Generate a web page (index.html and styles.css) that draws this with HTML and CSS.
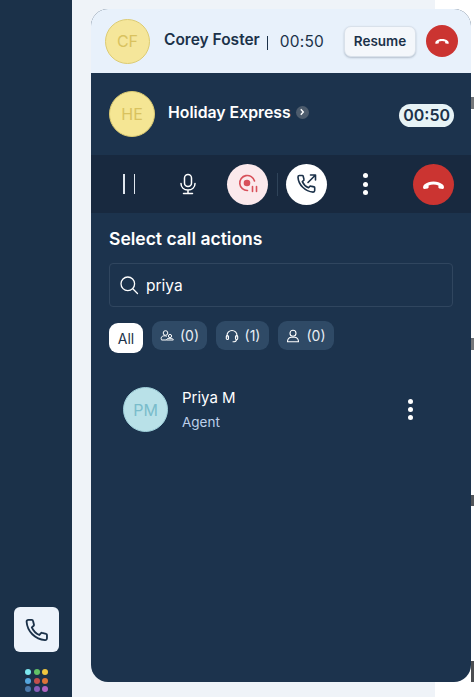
FILE: index.html
```html
<!DOCTYPE html>
<html lang="en">
<head>
<meta charset="utf-8">
<title>Call actions</title>
<link rel="stylesheet" href="styles.css">
</head>
<body>
<div class="app">
  <aside class="sidebar">
    <button class="phone-tile">
      <svg width="26" height="26" viewBox="0 0 24 24" fill="none" stroke="#1b3149" stroke-width="1.7" stroke-linejoin="round"><path d="M4.2 2.6h3.1c.5 0 .9.3 1 .8l.9 3.7c.1.4 0 .7-.3 1L7.2 9.600c1.300 3 3.900 5.700 7 7l1.500-1.700c.3-.3.7-.4 1-.3l3.700.9c.5.1.8.5.8 1v3.100c0 1-.8 1.800-1.800 1.700C10.300 20.600 3 13.300 2.400 4.400 2.400 3.400 3.200 2.600 4.200 2.600z"/></svg>
    </button>
    <div class="dots">
      <i class="d1"></i><i class="d2"></i><i class="d3"></i>
      <i class="d4"></i><i class="d5"></i><i class="d6"></i>
      <i class="d7"></i><i class="d8"></i><i class="d9"></i>
    </div>
  </aside>
  <main class="stage">
    <section class="panel">
      <header class="held">
        <div class="avatar avatar-yellow held-avatar">CF</div>
        <div class="held-name">Corey Foster</div>
        <div class="held-sep"></div>
        <div class="held-time">00:50</div>
        <button class="resume">Resume</button>
        <button class="end end-small">
          <svg width="16" height="16" viewBox="0 0 24 24" fill="#fff"><path d="M2 14.500c0-1 .4-1.900 1.200-2.500C5.600 10 8.700 9 12 9s6.400 1 8.800 3c.8.6 1.200 1.500 1.200 2.500v.7c0 .7-.6 1.200-1.300 1.100l-3-.5c-.6-.1-1-.6-1-1.100v-1.800c-1.400-.6-3.100-.9-4.700-.9s-3.300.3-4.700.9v1.800c0 .5-.4 1-1 1.100l-3 .5c-.7.1-1.300-.4-1.300-1.100z"/></svg>
        </button>
      </header>
      <div class="caller">
        <div class="avatar avatar-yellow caller-avatar">HE</div>
        <div class="caller-name">Holiday Express</div>
        <span class="chev">
          <svg width="8" height="8" viewBox="0 0 8 8" fill="none" stroke="#fff" stroke-width="1.400"><path d="M2.800 1.300 5.300 4 2.800 6.700"/></svg>
        </span>
        <div class="timer">00:50</div>
      </div>
      <div class="toolbar">
        <button class="tool tool-pause"><span></span><span></span></button>
        <button class="tool tool-mic">
          <svg width="22" height="24" viewBox="0 0 22 24" fill="none" stroke="#fff" stroke-width="1.500" stroke-linecap="round"><rect x="7.500" y="2.500" width="7" height="12" rx="3.500"/><path d="M4 11.500c0 4 3 6.500 7 6.500s7-2.500 7-6.500M11 18v3.500M6.500 21.500h9"/></svg>
        </button>
        <button class="circle circle-rec">
          <svg width="26" height="26" viewBox="0 0 26 26" fill="none" stroke="#d8505a" stroke-width="1.600" stroke-linecap="round"><path d="M12.500 19.500a7.500 7.500 0 1 1 7-9.500"/><circle cx="12" cy="12" r="3.300" fill="#d8505a" stroke="none"/><path d="M17.500 15.500v5M21.500 15.500v5"/></svg>
        </button>
        <span class="divider"></span>
        <button class="circle circle-transfer">
          <svg width="24" height="24" viewBox="0 0 24 24" fill="none" stroke="#1b3149" stroke-width="1.600" stroke-linejoin="round" stroke-linecap="round"><path d="M4.500 3.500h2.800c.4 0 .8.300.9.700l.8 3.300c.1.300 0 .7-.3.900L7.300 9.600c1.200 2.700 3.500 5 6.200 6.200l1.300-1.400c.2-.3.600-.4.900-.3l3.300.8c.4.100.7.500.7.900v2.800c0 .9-.7 1.500-1.600 1.500C10.200 19.600 3.400 12.800 3 5.100c0-.9.600-1.600 1.500-1.600z"/><path d="M13 10.500 20.500 3M15.500 3h5v5"/></svg>
        </button>
        <button class="tool tool-more"><i></i><i></i><i></i></button>
        <button class="end end-large">
          <svg width="25" height="25" viewBox="0 0 24 24" fill="#fff"><path d="M2 14.500c0-1 .4-1.900 1.200-2.500C5.600 10 8.700 9 12 9s6.400 1 8.800 3c.8.6 1.200 1.500 1.200 2.500v.7c0 .7-.6 1.200-1.300 1.100l-3-.5c-.6-.1-1-.6-1-1.100v-1.800c-1.400-.6-3.100-.9-4.700-.9s-3.300.3-4.700.9v1.800c0 .5-.4 1-1 1.100l-3 .5c-.7.1-1.300-.4-1.300-1.100z"/></svg>
        </button>
      </div>
      <div class="actions">
        <h2 class="actions-title">Select call actions</h2>
        <div class="search">
          <svg width="20" height="20" viewBox="0 0 20 20" fill="none" stroke="#fff" stroke-width="1.300" stroke-linecap="round"><circle cx="8.800" cy="8.800" r="6.800"/><path d="m13.800 13.800 4.700 4.700"/></svg>
          <span class="search-text">priya</span>
        </div>
        <div class="filters">
          <button class="chip chip-active">All</button>
          <button class="chip">
            <svg width="14" height="14" viewBox="0 0 14 14" fill="none" stroke="#fff" stroke-width="1"><circle cx="5.500" cy="4" r="2.300"/><circle cx="10" cy="7" r="1.600"/><path d="M1.500 10.800c-1-1.900.2-3.800 2.300-4 .9-.1 2 0 3 .5M6.500 11c.1-1 1-1.700 2.500-1.700h2c1.300 0 2.200.7 2.300 1.700z"/><path d="M1.500 11h5"/></svg>
            <span>(0)</span>
          </button>
          <button class="chip">
            <svg width="14" height="14" viewBox="0 0 14 14" fill="none" stroke="#fff" stroke-width="1.100" stroke-linecap="round"><path d="M2 8V6.500a5 5 0 0 1 10 0V8"/><rect x="1.300" y="6.500" width="2.200" height="4" rx="1"/><rect x="10.500" y="6.500" width="2.200" height="4" rx="1"/><path d="M11.500 10.500c0 1.500-1.300 2.300-3.500 2.300"/></svg>
            <span>(1)</span>
          </button>
          <button class="chip">
            <svg width="14" height="14" viewBox="0 0 14 14" fill="none" stroke="#fff" stroke-width="1.100"><circle cx="7" cy="4.300" r="3"/><path d="M1.500 12.800c0-2.700 2-4.300 3.500-4.600h4c1.500.3 3.500 1.900 3.500 4.600z" stroke-linejoin="round"/></svg>
            <span>(0)</span>
          </button>
        </div>
        <div class="result">
          <div class="avatar avatar-blue result-avatar">PM</div>
          <div class="result-text">
            <div class="result-name">Priya M</div>
            <div class="result-role">Agent</div>
          </div>
          <button class="tool tool-more result-more"><i></i><i></i><i></i></button>
        </div>
      </div>
    </section>
    <i class="tick tick-1"></i>
    <i class="tick tick-2"></i>
    <i class="tick tick-3"></i>
    <i class="tick tick-4"></i>
  </main>
</div>
</body>
</html>
```
FILE: styles.css
```css
* { box-sizing: border-box; }
html, body { margin: 0; padding: 0; height: 100%; }
body { font-family: Inter, "Liberation Sans", sans-serif; overflow: hidden; background: #fff; }
button { font: inherit; border: 0; padding: 0; background: none; cursor: pointer; display: flex; align-items: center; justify-content: center; }

.app { display: flex; width: 474px; height: 697px; }

.sidebar { width: 72px; flex: none; background: #1b3149; display: flex; flex-direction: column; align-items: center; justify-content: flex-end; padding-bottom: 5px; }
.phone-tile { width: 45px; height: 45px; border-radius: 6px; background: #edf3fb; margin-left: 1px; }
.dots { display: grid; grid-template-columns: repeat(3, 6px); gap: 2.300px; margin-top: 17px; margin-left: 1px; }
.dots i { width: 6px; height: 6px; border-radius: 50%; display: block; }
.d1 { background: #7de8f0; }
.d2 { background: #62c266; }
.d3 { background: #efc63f; }
.d4 { background: #55a6de; }
.d5 { background: #c24f4c; }
.d6 { background: #dc7438; }
.d7 { background: #4a78aa; }
.d8 { background: #875db9; }
.d9 { background: #b062c0; }

.stage { flex: 1; position: relative; background: linear-gradient(to right, #eff3f8 363px, #fff 363px); padding: 9px 3px 15px 19px; min-width: 0; }
.tick { position: absolute; right: 0; width: 3px; background: #77797c; display: block; }
.tick-1 { top: 97px; height: 12px; }
.tick-2 { top: 338px; height: 12px; }
.tick-3 { top: 495px; height: 11px; background: #55585c; }
.tick-4 { top: 661px; height: 21px; background: #4d4f52; }
.panel { height: 673px; border-radius: 17px; overflow: hidden; background: #1c334d; display: flex; flex-direction: column; }

.avatar { border-radius: 50%; display: flex; align-items: center; justify-content: center; flex: none; font-size: 16px; }
.avatar-yellow { background: #f5e69a; border: 1px solid #dccb72; color: #d9c25f; }
.avatar-blue { background: #b9e1e8; border: 1px solid #9fd0da; color: #79bccb; }

.held { height: 64px; flex: none; background: #e8f1fb; display: flex; align-items: center; padding: 0 13px 0 14px; }
.held-avatar { width: 45px; height: 45px; }
.held-name { font-size: 15.500px; font-weight: 600; color: #1b3149; margin-left: 14px; margin-top: -4px; white-space: nowrap; }
.held-sep { width: 1px; height: 14px; background: #1b3149; margin-left: 7px; margin-top: 3px; }
.held-time { font-size: 15.500px; color: #1b3149; margin-left: 12px; margin-top: 1px; letter-spacing: .2px; }
.resume { width: 72px; height: 31px; margin-left: auto; border-radius: 7px; background: #f4f7fb; border: 1px solid #d9e1ea; box-shadow: 0 1px 2px rgba(27,49,73,.25); color: #1b3149; font-size: 13.500px; font-weight: 600; }
.end { border-radius: 50%; background: #cb3431; flex: none; }
.end-small { width: 32px; height: 32px; margin-left: 10px; }

.caller { height: 82px; flex: none; display: flex; align-items: center; padding: 0 17px 0 18px; color: #fff; }
.caller-avatar { width: 46px; height: 46px; background: #f5e694; }
.caller-name { font-size: 15.800px; font-weight: 600; margin-left: 13px; margin-top: -4px; white-space: nowrap; }
.chev { width: 13px; height: 13px; border-radius: 50%; background: #4d5c6d; display: flex; align-items: center; justify-content: center; margin-left: 5px; margin-top: -4px; }
.timer { margin-left: auto; background: #e7f3f6; color: #1b3149; font-size: 16px; font-weight: 600; height: 23px; padding: 0 4px; border-radius: 12px; display: flex; align-items: center; margin-top: 2px; }

.toolbar { height: 58px; flex: none; background: #18293f; position: relative; display: flex; align-items: center; padding: 0 17px 0 27px; }
.tool { background: none; }
.tool-pause { width: 22px; height: 22px; gap: 9px; }
.tool-pause span { width: 1.500px; height: 20px; background: #dfe6ee; display: block; }
.tool-mic { width: 22px; height: 24px; margin-left: 37px; }
.circle { width: 41px; height: 41px; border-radius: 50%; flex: none; }
.circle-rec { background: #fbe9ec; margin-left: 28px; }
.divider { width: 1px; height: 23px; background: #2f4359; margin: 0 8px 0 9px; }
.circle-transfer { background: #fff; }
.tool-more { width: 8px; height: 22px; flex-direction: column; gap: 3.500px; }
.tool-more i { width: 5px; height: 5px; border-radius: 50%; background: #fff; display: block; }
.toolbar .tool-more { margin-left: 34px; }
.end-large { width: 41px; height: 41px; margin-left: auto; }

.actions { flex: 1; display: flex; flex-direction: column; padding: 15px 18px 0; color: #fff; }
.actions-title { margin: 0; font-size: 17.500px; font-weight: 600; line-height: 22px; }
.search { height: 44px; margin-top: 13px; border: 1px solid #30465f; border-radius: 4px; display: flex; align-items: center; padding: 0 9px; gap: 7px; }
.search-text { font-size: 15.500px; font-weight: 400; }
.filters { display: flex; gap: 9px; margin-top: 14px; align-items: flex-start; }
.chip { height: 29px; padding: 0 10px; border-radius: 9px; background: #2f4a66; color: #e8eef5; font-size: 14px; gap: 6px; }
.chip-active { width: 34px; padding: 0; background: #fff; color: #1b3149; height: 30px; margin-top: 2px; }
.chip:nth-child(2) { width: 55px; padding: 0; }
.chip:nth-child(3) { width: 53px; padding: 0; }
.chip:nth-child(4) { width: 56px; padding: 0; }

.result { display: flex; align-items: center; margin-top: 34px; padding: 0 22px 0 14px; }
.result-avatar { width: 45px; height: 45px; }
.result-text { margin-left: 14px; margin-top: 2px; }
.result-name { font-size: 15px; color: #fff; line-height: 22px; margin-top: -3px; }
.result-role { font-size: 13.500px; color: #bcd0ea; line-height: 20px; margin-top: 3px; }
.result-more { margin-left: auto; margin-right: 17px; gap: 3px; }
```
